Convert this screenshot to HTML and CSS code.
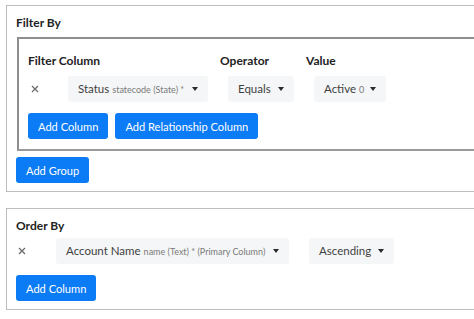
FILE: index.html
```html
<!DOCTYPE html>
<html lang="en">
<head>
    <meta charset="UTF-8">
    <title>Query Builder</title>
    <link rel="stylesheet" href="styles.css">
</head>
<body>
    <!-- Filter section -->
    <div class="panel">
        <div class="panel-title">Filter By</div>
        <div class="group">
            <div class="filter-grid">
                <div class="col-head span-2">Filter Column</div>
                <div class="col-head">Operator</div>
                <div class="col-head">Value</div>

                <button class="remove" title="Remove">
                    <svg width="8" height="8" viewBox="0 0 8 8"><path d="M1 1L7 7M7 1L1 7" stroke="#6b6b6b" stroke-width="1.3"/></svg>
                </button>
                <div class="select w-status"><span class="label">Status</span><span class="hint">statecode (State) *</span><span class="caret"></span></div>
                <div class="select w-equals"><span class="label">Equals</span><span class="caret"></span></div>
                <div class="select w-active"><span class="label">Active</span><span class="hint">0</span><span class="caret"></span></div>
            </div>
            <div class="actions">
                <button class="btn">Add Column</button>
                <button class="btn">Add Relationship Column</button>
            </div>
        </div>
        <button class="btn">Add Group</button>
    </div>

    <!-- Order section -->
    <div class="panel order">
        <div class="panel-title">Order By</div>
        <div class="order-grid">
            <button class="remove" title="Remove">
                <svg width="8" height="8" viewBox="0 0 8 8"><path d="M1 1L7 7M7 1L1 7" stroke="#6b6b6b" stroke-width="1.3"/></svg>
            </button>
            <div class="select w-account"><span class="label">Account Name</span><span class="hint">name (Text) * (Primary Column)</span><span class="caret"></span></div>
            <div class="select w-sort"><span class="label">Ascending</span><span class="caret"></span></div>
        </div>
        <div class="actions">
            <button class="btn">Add Column</button>
        </div>
    </div>
</body>
</html>
```

FILE: styles.css
```css
/* General */
body {
    margin: 5px 0 0 6px;
    font-family: 'Lato', 'Open Sans', sans-serif;
    font-size: 12px;
    color: #222;
    background: #fff;
    overflow: hidden;
}

/* Panels */
.panel {
    width: 540px;
    border: 1px solid #bdbdbd;
    padding: 9px 9px 8px 9px;
}

.panel.order {
    margin-top: 16px;
}

.panel-title {
    font-weight: bold;
    font-size: 12px;
    line-height: 16px;
    margin-bottom: 6px;
}

.order .panel-title {
    margin-bottom: 4px;
}

.group {
    border: 2px solid #8e8e8e;
    border-bottom-color: #9a9a9a;
    padding: 14px 9px 10px 9px;
    margin: 0 0 6px 1px;
}

/* Column grids */
.filter-grid {
    display: grid;
    grid-template-columns: 32px auto auto auto;
    justify-content: start;
    row-gap: 7px;
    align-items: center;
}

.order-grid {
    display: grid;
    grid-template-columns: 32px auto auto;
    justify-content: start;
    align-items: center;
}

.col-head {
    font-weight: bold;
    line-height: 16px;
}

.span-2 {
    grid-column: span 2;
}

.remove {
    border: none;
    background: none;
    padding: 0 0 0 3px;
    height: 26px;
    display: flex;
    align-items: center;
    cursor: pointer;
}

.order .remove {
    padding-left: 2px;
}

/* Dropdowns */
.select {
    display: flex;
    align-items: baseline;
    height: 26px;
    line-height: 26px;
    box-sizing: border-box;
    padding: 0 10px;
    margin: 0 12px 0 8px;
    background: #f5f6f7;
    border-radius: 3px;
    color: #3f3f3f;
    font-size: 11.5px;
    white-space: nowrap;
}

.select .hint {
    font-size: 9px;
    color: #7a7a7a;
    margin-left: 3px;
}

.caret {
    margin-left: auto;
    align-self: center;
    width: 0;
    height: 0;
    border-left: 3.5px solid transparent;
    border-right: 3.5px solid transparent;
    border-top: 4px solid #2a2a2a;
}

.w-status { width: 140px; }
.w-equals { width: 66px; }
.w-active { width: 72px; }
.w-account { width: 233px; margin-right: 20px; }
.w-sort { width: 85px; margin-left: 0; }

/* Buttons */
.actions {
    display: flex;
    gap: 7px;
    margin-top: 11px;
}

.btn {
    height: 26px;
    padding: 0 10px;
    border: none;
    border-radius: 3px;
    background: #0b7bf6;
    color: #fff;
    font-family: 'Lato', 'Open Sans', sans-serif;
    font-size: 11.1px;
    cursor: pointer;
}

.btn:hover {
    background: #0069d9;
}
```
